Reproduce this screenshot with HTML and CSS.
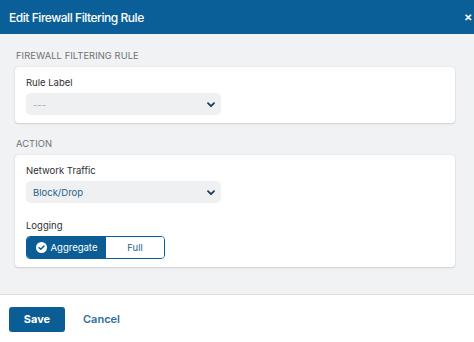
FILE: index.html
```html
<!DOCTYPE html>
<html>
<head>
<meta charset="utf-8">
<link rel="stylesheet" href="styles.css">
</head>
<body>
<div class="modal">
  <header class="modal-header">
    <h1 class="title">Edit Firewall Filtering Rule</h1>
    <span class="close">✕</span>
  </header>
  <main class="modal-body">
    <section class="section">
      <h2 class="section-title">FIREWALL FILTERING RULE</h2>
      <div class="card">
        <label class="field-label">Rule Label</label>
        <div class="select placeholder"><span>---</span>
          <svg class="chev" width="8" height="6" viewBox="0 0 8 6"><path d="M1 1.2 L4 4.2 L7 1.2" fill="none" stroke="#1d3d5c" stroke-width="1.8" stroke-linecap="round" stroke-linejoin="round"/></svg>
        </div>
      </div>
    </section>
    <section class="section">
      <h2 class="section-title">ACTION</h2>
      <div class="card">
        <label class="field-label">Network Traffic</label>
        <div class="select value"><span>Block/Drop</span>
          <svg class="chev" width="8" height="6" viewBox="0 0 8 6"><path d="M1 1.2 L4 4.2 L7 1.2" fill="none" stroke="#1d3d5c" stroke-width="1.8" stroke-linecap="round" stroke-linejoin="round"/></svg>
        </div>
        <label class="field-label logging">Logging</label>
        <div class="segmented">
          <button class="seg active">
            <svg width="11" height="11" viewBox="0 0 12 12"><circle cx="6" cy="6" r="6" fill="#fff"/><path d="M3.3 6.2 L5.2 8 L8.7 4.3" fill="none" stroke="#0b5e95" stroke-width="1.6" stroke-linecap="round" stroke-linejoin="round"/></svg>
            Aggregate</button>
          <button class="seg">Full</button>
        </div>
      </div>
    </section>
  </main>
  <footer class="modal-footer">
    <button class="btn-save">Save</button>
    <button class="btn-cancel">Cancel</button>
  </footer>
</div>
</body>
</html>
```

FILE: styles.css
```css
* { box-sizing: border-box; }
html, body { margin: 0; padding: 0; background: #fff; }
body { font-family: Inter, "Noto Sans", sans-serif; width: 474px; height: 342px; overflow: hidden; }

.modal { display: flex; flex-direction: column; height: 342px; }

.modal-header {
  height: 34px;
  background: #0b5f98;
  display: flex;
  align-items: center;
  justify-content: space-between;
  padding: 0 2px 0 9px;
}
.title { margin: 0; color: #fff; font-size: 12px; font-weight: 500; letter-spacing: -0.45px; }
.close { color: #fff; font-size: 10px; font-weight: 700; line-height: 12px; }

.modal-body {
  background: #f1f2f4;
  padding: 15px 19px 27px 15px;
  border-bottom: 1px solid #dcdee2;
  display: flex;
  flex-direction: column;
  gap: 14px;
}
.section-title {
  margin: 0 0 5px 1px;
  font-size: 9.3px;
  font-weight: 400;
  color: #6e7176;
  letter-spacing: 0.1px;
  line-height: 13px;
}
.card {
  background: #fff;
  border-radius: 3px;
  box-shadow: 0 0 1px rgba(0,0,0,0.25), 0 1px 2px rgba(0,0,0,0.12);
  padding: 9px 12px 8px 11px;
  display: flex;
  flex-direction: column;
  align-items: flex-start;
}
.field-label { font-size: 9.5px; color: #2e3033; line-height: 13px; margin-bottom: 4px; }
.field-label.logging { margin-top: 16px; margin-bottom: 4px; }
.select {
  width: 195px;
  height: 22px;
  background: #eef0f2;
  border-radius: 5px;
  display: flex;
  align-items: center;
  justify-content: space-between;
  padding: 0 6px 0 7px;
  font-size: 9.5px;
}
.select.placeholder span { color: #a5a9ae; }
.select.value span { color: #23628f; }
.chev { display: block; margin-top: 1px; }

.segmented { display: flex; border: 1px solid #0b5e95; border-radius: 4px; overflow: hidden; height: 23px; }
.seg {
  font-family: inherit;
  font-size: 9.5px;
  border: 0;
  background: #fff;
  color: #2a5f86;
  display: flex;
  align-items: center;
  justify-content: center;
  gap: 4px;
  padding: 0;
}
.seg.active { background: #0b5e95; color: #fff; width: 79px; }
.seg:not(.active) { width: 58px; }

.modal-footer { flex: 1; display: flex; align-items: center; gap: 18px; padding: 1px 9px 0; }
.btn-save {
  font-family: inherit;
  width: 56px;
  height: 25px;
  background: #0b5e95;
  color: #fff;
  border: 0;
  border-radius: 3px;
  font-size: 11px;
  font-weight: 700;
}
.btn-cancel {
  font-family: inherit;
  background: none;
  border: 0;
  padding: 0;
  color: #2f6e9e;
  font-size: 11px;
  font-weight: 600;
}
```
